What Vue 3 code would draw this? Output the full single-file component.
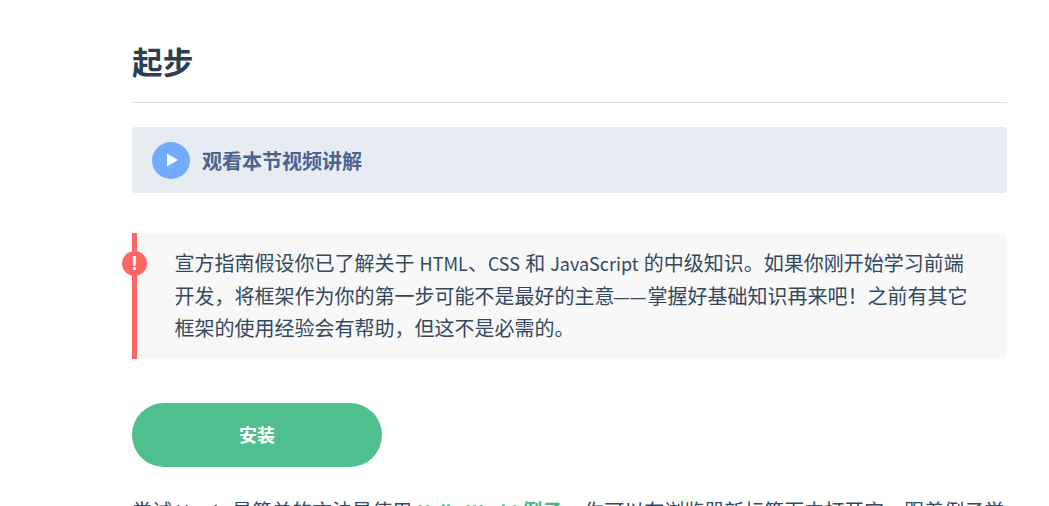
<script setup>
</script>

<template>
  <main class="page">
    <h1 class="title">起步</h1>
    <a class="video">
      <span class="play"><svg width="11" height="14" viewBox="0 0 11 14"><path d="M0 0.5 L11 7 L0 13.5 Z" fill="#fff" /></svg></span>
      <span class="video-text">观看本节视频讲解</span>
    </a>
    <section class="alert">
      <span class="bang">!</span>
      <p class="alert-text">宣方指南假设你已了解关于 <span class="en">HTML</span>、<span class="en">CSS</span> 和 <span class="en">JavaScript</span> 的中级知识。如果你刚开始学习前端开发，将框架作为你的第一步可能不是最好的主意<span class="dash">—</span><span class="dash">—</span>掌握好基础知识再来吧！之前有其它框架的使用经验会有帮助，但这不是必需的。</p>
    </section>
    <a class="install">安装</a>
    <p class="intro">尝试 <span class="en">Vue.js</span> 最简单的方法是使用 <a class="link"><span class="en tight">Hello World</span> 例子</a>。你可以在浏览器新标签页中打开它，跟着例子学习一些基础用法。</p>
  </main>
</template>

<style>
html, body { margin: 0; background: #fff; height: 506px; overflow: hidden; }
</style>

<style scoped>
.page {
  box-sizing: border-box;
  width: 1049px;
  height: 506px;
  overflow: hidden;
  padding: 0 42px 0 132px;
  font-family: "Noto Sans CJK SC", "Noto Sans", sans-serif;
  color: #34495e;
}
.title {
  box-sizing: border-box;
  height: 103px;
  margin: 0;
  padding-top: 39px;
  line-height: 44px;
  font-size: 30.67px;
  font-weight: 700;
  color: #2c3e50;
  border-bottom: 1px solid #ddd;
}
.video {
  display: flex;
  align-items: center;
  height: 66px;
  margin-top: 24px;
  padding-left: 20px;
  background: #e7ecf3;
  border-radius: 3px;
}
.play {
  display: flex;
  align-items: center;
  justify-content: center;
  box-sizing: border-box;
  width: 38px;
  height: 37px;
  padding-left: 2px;
  border-radius: 50%;
  background: #73abfe;
}
.video-text {
  margin-left: 12px;
  font-size: 20px;
  font-weight: 700;
  color: #4a6390;
}
.alert {
  position: relative;
  box-sizing: border-box;
  height: 126px;
  margin-top: 40px;
  padding: 14px 38px 0 37.5px;
  background: #f8f8f8;
  border-left: 5px solid #f66;
}
.bang {
  position: absolute;
  left: -15px;
  top: 17.5px;
  width: 25px;
  height: 25px;
  border-radius: 50%;
  background: #f66;
  color: #fff;
  font-size: 20px;
  font-weight: 700;
  line-height: 25px;
  text-align: center;
  font-family: "Liberation Sans", sans-serif;
}
.alert-text {
  margin: 0;
  font-size: 20px;
  line-height: 32.6px;
  word-spacing: 0.6px;
}
.en {
  font-size: 18px;
  line-height: 1;
}
.tight {
  letter-spacing: -0.4px;
}
.dash {
  display: inline-block;
  width: 16.5px;
  font-size: 19px;
  line-height: 1;
  text-indent: -1.5px;
  white-space: nowrap;
}
.install {
  display: flex;
  align-items: center;
  justify-content: center;
  box-sizing: border-box;
  width: 250px;
  height: 64px;
  margin-top: 44px;
  padding-bottom: 2px;
  border-radius: 32px;
  background: #4fc08d;
  color: #fff;
  font-size: 18px;
  font-weight: 700;
}
.intro {
  margin: 27px 0 0;
  font-size: 20px;
  line-height: 33px;
  word-spacing: 0.7px;
}
.link {
  margin-right: 2px;
  color: #42b983;
  font-weight: 700;
}
</style>
